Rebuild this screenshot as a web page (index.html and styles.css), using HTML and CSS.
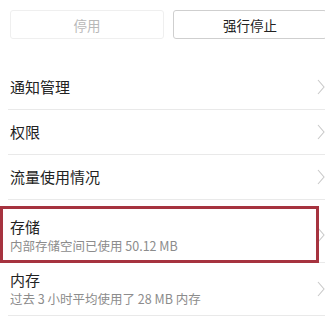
FILE: index.html
```html
<!DOCTYPE html>
<html lang="zh">
<head>
<meta charset="utf-8">
<link rel="stylesheet" href="styles.css">
</head>
<body>
<div class="page">
  <div class="actions">
    <div class="btn btn-disabled">停用</div>
    <div class="btn">强行停止</div>
  </div>
  <div class="list">
    <div class="row single">
      <div class="text"><div class="title">通知管理</div></div>
      <svg class="chev" width="8" height="16" viewBox="0 0 8 16"><path d="M1 1 L7 8 L1 15" fill="none" stroke="#c9c9c9" stroke-width="1.1"/></svg>
    </div>
    <div class="row single">
      <div class="text"><div class="title">权限</div></div>
      <svg class="chev" width="8" height="16" viewBox="0 0 8 16"><path d="M1 1 L7 8 L1 15" fill="none" stroke="#c9c9c9" stroke-width="1.1"/></svg>
    </div>
    <div class="row single">
      <div class="text"><div class="title">流量使用情况</div></div>
      <svg class="chev" width="8" height="16" viewBox="0 0 8 16"><path d="M1 1 L7 8 L1 15" fill="none" stroke="#c9c9c9" stroke-width="1.1"/></svg>
    </div>
    <div class="row double storage">
      <div class="text">
        <div class="title">存储</div>
        <div class="sub">内部存储空间已使用 50.12 MB</div>
      </div>
      <svg class="chev" width="8" height="16" viewBox="0 0 8 16"><path d="M1 1 L7 8 L1 15" fill="none" stroke="#c9c9c9" stroke-width="1.1"/></svg>
      <div class="highlight"></div>
    </div>
    <div class="row double">
      <div class="text">
        <div class="title">内存</div>
        <div class="sub">过去 3 小时平均使用了 28 MB 内存</div>
      </div>
      <svg class="chev" width="8" height="16" viewBox="0 0 8 16"><path d="M1 1 L7 8 L1 15" fill="none" stroke="#c9c9c9" stroke-width="1.1"/></svg>
    </div>
  </div>
</div>
</body>
</html>
```

FILE: styles.css
```css
html, body {
  margin: 0;
  padding: 0;
  background: #ffffff;
}
body {
  width: 325px;
  height: 328px;
  overflow: hidden;
  font-family: "Noto Sans CJK SC", "Noto Sans", sans-serif;
  color: #222222;
}
.page {
  width: 325px;
  overflow: hidden;
}
.actions {
  display: flex;
  gap: 9px;
  padding: 10px 0 0 10px;
  margin-bottom: 26px;
  overflow: hidden;
}
.btn {
  flex: 0 0 auto;
  width: 152px;
  height: 27px;
  border: 1px solid #cfcfcf;
  border-radius: 3px;
  display: flex;
  align-items: center;
  justify-content: center;
  font-size: 13.5px;
  color: #222222;
}
.btn-disabled {
  border-color: #efefef;
  color: #b8b8b8;
}
.list {
  display: flex;
  flex-direction: column;
}
.row {
  position: relative;
  margin-left: 8px;
  padding-left: 2px;
  border-bottom: 1px solid #e9e9e9;
  display: flex;
  align-items: center;
  justify-content: space-between;
}
.row.single {
  height: 44px;
}
.row.double {
  padding-top: 7px;
  padding-bottom: 8px;
  height: 37px;
}
.row.storage {
  padding-top: 16px;
  height: 38px;
}
.title {
  font-size: 15px;
  line-height: 20px;
  color: #222222;
}
.sub {
  font-size: 12.5px;
  line-height: 17px;
  color: #8c8c8c;
}
.chev {
  flex: 0 0 auto;
  margin-right: 0;
}
.highlight {
  position: absolute;
  left: -8px;
  top: 6px;
  width: 313px;
  height: 51px;
  border: 3px solid #a6333f;
  pointer-events: none;
}
```
